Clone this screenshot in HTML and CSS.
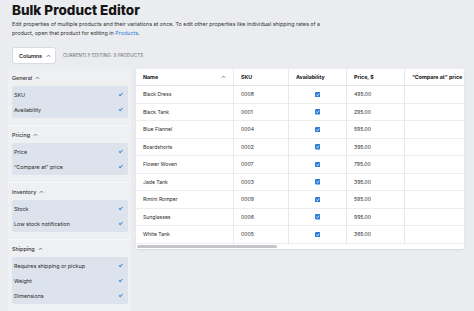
FILE: index.html
```html
<!DOCTYPE html>
<html lang="en">
<head>
  <meta charset="UTF-8" />
  <meta name="viewport" content="width=device-width, initial-scale=1.0" />
  <title>Bulk Product Editor</title>
  <link rel="stylesheet" href="styles.css">
</head>
<body>
  <div class="page">
    <h1 class="title">Bulk Product Editor</h1>
    <p class="intro">
      Edit properties of multiple products and their variations at once. To edit other properties like individual shipping rates of a<br>
      product, open that product for editing in <a href="#">Products</a>.
    </p>

    <div class="toolbar">
      <button class="columns-btn">Columns
        <svg class="caret" viewBox="0 0 6 4"><path d="M1 3.2 L3 1.2 L5 3.2" /></svg>
      </button>
      <span class="count">Currently editing: 9 products</span>
    </div>

    <div class="workspace">
      <aside class="sidebar">
        <div class="group">
          <div class="group-title">General <svg class="caret" viewBox="0 0 6 4"><path d="M1 3.2 L3 1.2 L5 3.2" /></svg></div>
          <ul class="fields">
            <li>SKU <span class="tick"></span></li>
            <li>Availability <span class="tick"></span></li>
          </ul>
        </div>
        <div class="group">
          <div class="group-title">Pricing <svg class="caret" viewBox="0 0 6 4"><path d="M1 3.2 L3 1.2 L5 3.2" /></svg></div>
          <ul class="fields">
            <li>Price <span class="tick"></span></li>
            <li>“Compare at” price <span class="tick"></span></li>
          </ul>
        </div>
        <div class="group">
          <div class="group-title">Inventory <svg class="caret" viewBox="0 0 6 4"><path d="M1 3.2 L3 1.2 L5 3.2" /></svg></div>
          <ul class="fields">
            <li>Stock <span class="tick"></span></li>
            <li>Low stock notification <span class="tick"></span></li>
          </ul>
        </div>
        <div class="group">
          <div class="group-title">Shipping <svg class="caret" viewBox="0 0 6 4"><path d="M1 3.2 L3 1.2 L5 3.2" /></svg></div>
          <ul class="fields">
            <li>Requires shipping or pickup <span class="tick"></span></li>
            <li>Weight <span class="tick"></span></li>
            <li>Dimensions <span class="tick"></span></li>
          </ul>
        </div>
      </aside>

      <div class="grid-card">
        <div class="grid-scroll">
          <table class="grid">
            <colgroup>
              <col class="c-name"><col class="c-sku"><col class="c-avail"><col class="c-price"><col class="c-compare">
            </colgroup>
            <thead>
              <tr>
                <th><span class="th-sort">Name <svg class="caret" viewBox="0 0 6 4"><path d="M1 3.2 L3 1.2 L5 3.2" /></svg></span></th>
                <th>SKU</th>
                <th>Availability</th>
                <th>Price, $</th>
                <th>“Compare at” price</th>
              </tr>
            </thead>
            <tbody id="rows"></tbody>
          </table>
        </div>
        <div class="scrollbar"><div class="thumb"></div></div>
      </div>
    </div>
  </div>

  <script>
    const products = [
      ['Black Dress', '0008', '495.00'],
      ['Black Tank', '0001', '295.00'],
      ['Blue Flannel', '0004', '595.00'],
      ['Boardshorts', '0002', '395.00'],
      ['Flower Woven', '0007', '795.00'],
      ['Jade Tank', '0003', '395.00'],
      ['Rimini Romper', '0009', '595.00'],
      ['Sunglasses', '0006', '995.00'],
      ['White Tank', '0005', '365.00']
    ];

    const box = '<svg class="check" viewBox="0 0 6 6"><rect width="6" height="6" rx="1.2" fill="#2d7fd6"/><path d="M1.5 3.1 L2.6 4.1 L4.5 1.9" fill="none" stroke="#fff" stroke-width="0.9"/></svg>';

    document.getElementById('rows').innerHTML = products.map(p =>
      `<tr><td>${p[0]}</td><td>${p[1]}</td><td class="center">${box}</td><td>${p[2]}</td><td></td></tr>`
    ).join('');
  </script>
</body>
</html>
```

FILE: styles.css
```css
* {
  box-sizing: border-box;
}

body {
  margin: 0;
  background: #eaecef;
  font-family: Inter, "Noto Sans", sans-serif;
  color: #222;
}

.page {
  padding: 0 8px;
}

.title {
  margin: 2px 0 0 4px;
  font-size: 13.5px;
  line-height: 16px;
  font-weight: 800;
  color: #161616;
}

.intro {
  margin: 2px 0 0 4px;
  font-size: 5.4px;
  line-height: 9px;
  color: #333;
}

.intro a {
  color: #2d7fd6;
  text-decoration: none;
}

.toolbar {
  display: flex;
  align-items: center;
  gap: 7px;
  margin: 9px 0 0 4px;
}

.columns-btn {
  display: flex;
  align-items: center;
  gap: 4px;
  height: 17px;
  width: 44px;
  padding: 0 0 0 6px;
  font-family: inherit;
  font-size: 5.4px;
  font-weight: 600;
  color: #222;
  background: #fff;
  border: 1px solid #d8dbe0;
  border-radius: 3px;
}

.caret {
  width: 5px;
  height: 3.5px;
  fill: none;
  stroke: #555;
  stroke-width: 0.9;
}

.count {
  font-size: 4.4px;
  letter-spacing: 0.15px;
  text-transform: uppercase;
  color: #666;
}

.workspace {
  display: flex;
  gap: 5px;
  margin-top: 5px;
}

.sidebar {
  width: 123px;
  padding-bottom: 2px;
  background: #eef0f2;
  border-bottom: 1px solid #e4e6ea;
}

.group {
  padding: 0 3px 7px 4px;
  border-bottom: 1px solid #f7f8f9;
}

.group:last-child {
  border-bottom: none;
}

.group-title {
  display: flex;
  align-items: center;
  gap: 3px;
  height: 17px;
  font-size: 5.4px;
  font-weight: 500;
  color: #333;
}

.fields {
  list-style: none;
  margin: 0;
  padding: 1px 0;
  background: #dce3ec;
  border-radius: 2px;
}

.fields li {
  display: flex;
  align-items: center;
  justify-content: space-between;
  height: 15px;
  padding: 0 5px 0 2px;
  font-size: 5.4px;
  color: #2a2a2a;
}

.tick {
  width: 4px;
  height: 2.4px;
  margin-top: -1px;
  border-left: 1px solid #3d8ad6;
  border-bottom: 1px solid #3d8ad6;
  transform: rotate(-45deg);
}

.grid-card {
  width: 328px;
  height: 180px;
  background: #fff;
  border-radius: 2px;
  box-shadow: 0 1px 2px rgba(0, 0, 0, 0.08);
  overflow: hidden;
}

.grid-scroll {
  overflow: hidden;
}

.grid {
  width: 344px;
  table-layout: fixed;
  border-collapse: separate;
  border-spacing: 0;
}

.c-name { width: 98px; }
.c-sku { width: 55px; }
.c-avail { width: 58px; }
.c-price { width: 58px; }
.c-compare { width: 75px; }

.grid th,
.grid td {
  height: 17.5px;
  padding: 0 4px 0 7px;
  text-align: left;
  font-size: 5.1px;
  color: #2a2a2a;
  border-bottom: 1px solid #eceef0;
  border-right: 1px solid #e6e8eb;
  white-space: nowrap;
  overflow: hidden;
}

.grid th {
  height: 17px;
  font-size: 5.3px;
  font-weight: 700;
  color: #151515;
  border-bottom-color: #e2e4e7;
}

.th-sort {
  display: flex;
  align-items: center;
  justify-content: space-between;
  padding-right: 3px;
}

.grid td.center {
  text-align: center;
  padding: 0;
}

.check {
  display: inline-block;
  width: 5.5px;
  height: 5.5px;
  vertical-align: middle;
}

.scrollbar {
  padding: 1.5px 1px;
}

.thumb {
  width: 140px;
  height: 3px;
  border-radius: 2px;
  background: #c3c5c8;
}
```
